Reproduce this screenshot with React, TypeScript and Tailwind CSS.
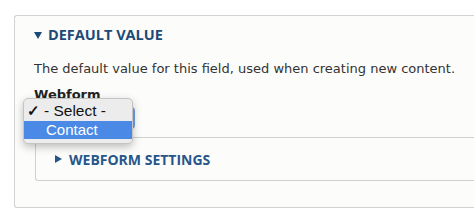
import React from "react";

const font = { fontFamily: '"DejaVu Sans", "Liberation Sans", sans-serif' };
const headFont = { fontFamily: '"Open Sans", "DejaVu Sans", sans-serif' };

const App = () => {
  return (
    <div
      className="relative h-[217px] w-[474px] overflow-hidden bg-white pl-[14px] pt-[15px]"
      style={font}
    >
      <div className="h-[193px] w-[480px] rounded-l-[3px] border border-r-0 border-[#d2d2d0] bg-[#fcfcfa] pl-[19px] pt-[10px]">
        <div
          className="flex h-[18px] items-center gap-[6px] text-[14.5px] font-bold text-[#1d4a76]"
          style={headFont}
        >
          <svg width="8" height="7" viewBox="0 0 8 7">
            <path d="M0 0h8L4 7z" fill="currentColor" />
          </svg>
          <span>DEFAULT VALUE</span>
        </div>
        <p className="mt-[16px] text-[13px] leading-[18px] text-[#333]">
          The default value for this field, used when creating new content.
        </p>
        <p className="mt-[8px] text-[13px] font-bold leading-[18px] text-[#222]">
          Webform
        </p>
        <div className="mt-[3px] h-[22px] w-[101px] rounded-[4px] border-2 border-[#6fa1e8] bg-white" />
        <div className="ml-[1px] mt-[8px] flex h-[44px] items-center rounded-l-[3px] border border-r-0 border-[#d0d0ce] bg-[#fcfcfa] pl-[19px]">
          <div
            className="flex items-center gap-[7px] text-[14px] font-bold text-[#27568a]"
            style={headFont}
          >
            <svg width="7" height="8" viewBox="0 0 7 8">
              <path d="M0 0v8l7-4z" fill="currentColor" />
            </svg>
            <span>WEBFORM SETTINGS</span>
          </div>
        </div>
      </div>

      <div
        className="absolute left-[23px] top-[98px] w-[110px] rounded-[5px] border border-[#c4c4c4] bg-[#ececec] pb-[4px] pt-[2px] shadow-[0_3px_8px_rgba(0,0,0,0.25)]"
        style={{ fontFamily: '"Liberation Sans", Arial, sans-serif' }}
      >
        <div className="flex h-[20px] items-center pl-[3px] text-[15.5px] text-[#111]">
          <span className="w-[17px] text-[15px] font-bold">✓</span>
          <span>- Select -</span>
        </div>
        <div className="flex h-[18px] items-center bg-[#4a8ae6] pl-[22px] text-[15px] text-white">
          Contact
        </div>
      </div>
    </div>
  );
};

export default App;
